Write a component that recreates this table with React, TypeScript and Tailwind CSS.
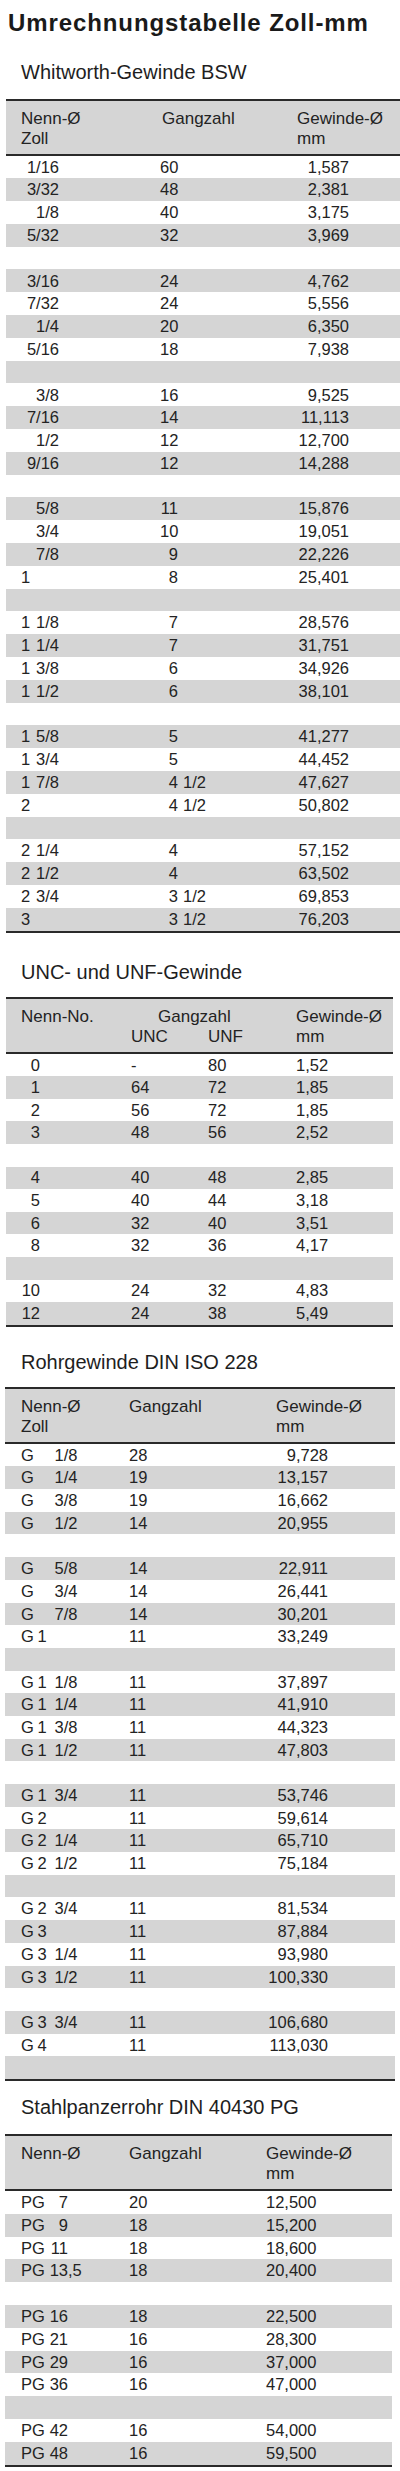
import React from "react";

type BswRow = [string, string, string, string, string] | null;
type UncRow = [string, string, string, string] | null;
type RohrRow = [string, string, string, string] | null;
type PgRow = [string, string, string, string] | null;

const bsw: BswRow[] = [
  ["", "1/16", "60", "", "1,587"],
  ["", "3/32", "48", "", "2,381"],
  ["", "1/8", "40", "", "3,175"],
  ["", "5/32", "32", "", "3,969"],
  null,
  ["", "3/16", "24", "", "4,762"],
  ["", "7/32", "24", "", "5,556"],
  ["", "1/4", "20", "", "6,350"],
  ["", "5/16", "18", "", "7,938"],
  null,
  ["", "3/8", "16", "", "9,525"],
  ["", "7/16", "14", "", "11,113"],
  ["", "1/2", "12", "", "12,700"],
  ["", "9/16", "12", "", "14,288"],
  null,
  ["", "5/8", "11", "", "15,876"],
  ["", "3/4", "10", "", "19,051"],
  ["", "7/8", "9", "", "22,226"],
  ["1", "", "8", "", "25,401"],
  null,
  ["1", "1/8", "7", "", "28,576"],
  ["1", "1/4", "7", "", "31,751"],
  ["1", "3/8", "6", "", "34,926"],
  ["1", "1/2", "6", "", "38,101"],
  null,
  ["1", "5/8", "5", "", "41,277"],
  ["1", "3/4", "5", "", "44,452"],
  ["1", "7/8", "4", "1/2", "47,627"],
  ["2", "", "4", "1/2", "50,802"],
  null,
  ["2", "1/4", "4", "", "57,152"],
  ["2", "1/2", "4", "", "63,502"],
  ["2", "3/4", "3", "1/2", "69,853"],
  ["3", "", "3", "1/2", "76,203"],
];

const unc: UncRow[] = [
  ["0", "-", "80", "1,52"],
  ["1", "64", "72", "1,85"],
  ["2", "56", "72", "1,85"],
  ["3", "48", "56", "2,52"],
  null,
  ["4", "40", "48", "2,85"],
  ["5", "40", "44", "3,18"],
  ["6", "32", "40", "3,51"],
  ["8", "32", "36", "4,17"],
  null,
  ["10", "24", "32", "4,83"],
  ["12", "24", "38", "5,49"],
];

const rohr: RohrRow[] = [
  ["", "1/8", "28", "9,728"],
  ["", "1/4", "19", "13,157"],
  ["", "3/8", "19", "16,662"],
  ["", "1/2", "14", "20,955"],
  null,
  ["", "5/8", "14", "22,911"],
  ["", "3/4", "14", "26,441"],
  ["", "7/8", "14", "30,201"],
  ["1", "", "11", "33,249"],
  null,
  ["1", "1/8", "11", "37,897"],
  ["1", "1/4", "11", "41,910"],
  ["1", "3/8", "11", "44,323"],
  ["1", "1/2", "11", "47,803"],
  null,
  ["1", "3/4", "11", "53,746"],
  ["2", "", "11", "59,614"],
  ["2", "1/4", "11", "65,710"],
  ["2", "1/2", "11", "75,184"],
  null,
  ["2", "3/4", "11", "81,534"],
  ["3", "", "11", "87,884"],
  ["3", "1/4", "11", "93,980"],
  ["3", "1/2", "11", "100,330"],
  null,
  ["3", "3/4", "11", "106,680"],
  ["4", "", "11", "113,030"],
  null,
];

const pg: PgRow[] = [
  ["7", "", "20", "12,500"],
  ["9", "", "18", "15,200"],
  ["11", "", "18", "18,600"],
  ["13", ",5", "18", "20,400"],
  null,
  ["16", "", "18", "22,500"],
  ["21", "", "16", "28,300"],
  ["29", "", "16", "37,000"],
  ["36", "", "16", "47,000"],
  null,
  ["42", "", "16", "54,000"],
  ["48", "", "16", "59,500"],
];

const stripe = (i: number) => (i % 2 === 1 ? "bg-[#d5d5d5]" : "bg-white");

function Heading({ children, className }: { children: React.ReactNode; className: string }) {
  return <h2 className={`pl-[21px] text-[20px] leading-[24px] font-normal text-[#1e1e1e] ${className}`}>{children}</h2>;
}

export default function App() {
  return (
    <div className="w-[400px] bg-white font-['Liberation_Sans',Arial,sans-serif] text-[#232323]">
      <h1 className="pl-[8px] pt-[9px] text-[24px] leading-[28px] font-bold tracking-[0.9px] text-[#1a1a1a]">
        Umrechnungstabelle Zoll-mm
      </h1>

      {/* Whitworth */}
      <Heading className="mt-[23px]">Whitworth-Gewinde BSW</Heading>
      <div className="ml-[6px] mt-[14.5px] w-[394px] border-b-2 border-[#2a2a2a]">
        <div className="flex border-y-2 border-[#2a2a2a] bg-[#d5d5d5] pl-[15px] pt-[8px] pb-[5px] text-[17px] leading-[20px]">
          <div className="w-[141px]">
            <div>Nenn-Ø</div>
            <div>Zoll</div>
          </div>
          <div className="w-[135px]">Gangzahl</div>
          <div>
            <div>Gewinde-Ø</div>
            <div>mm</div>
          </div>
        </div>
        {bsw.map((r, i) => (
          <div key={i} className={`flex h-[22.8px] items-center pl-[15px] text-[16.5px] ${stripe(i)}`}>
            {r && (
              <>
                <div className="w-[139px]">
                  <div className="flex w-[38px]">
                    <span>{r[0]}</span>
                    <span className="ml-auto">{r[1]}</span>
                  </div>
                </div>
                <div className="flex w-[130px]">
                  <span className="w-[18px] text-right">{r[2]}</span>
                  {r[3] && <span className="ml-[5px]">{r[3]}</span>}
                </div>
                <div className="w-[59px] text-right">{r[4]}</div>
              </>
            )}
          </div>
        ))}
      </div>

      {/* UNC / UNF */}
      <Heading className="mt-[27px]">UNC- und UNF-Gewinde</Heading>
      <div className="ml-[6px] mt-[13px] w-[387px] border-b-2 border-[#2a2a2a]">
        <div className="border-y-2 border-[#2a2a2a] bg-[#d5d5d5] pl-[15px] pt-[8px] pb-[5px] text-[17px] leading-[20px]">
          <div className="flex">
            <div className="w-[137px]">Nenn-No.</div>
            <div className="w-[138px]">Gangzahl</div>
            <div>Gewinde-Ø</div>
          </div>
          <div className="flex">
            <div className="w-[110px]" />
            <div className="w-[77px]">UNC</div>
            <div className="w-[88px]">UNF</div>
            <div>mm</div>
          </div>
        </div>
        {unc.map((r, i) => (
          <div key={i} className={`flex h-[22.6px] items-center pl-[15px] text-[16.5px] ${stripe(i)}`}>
            {r && (
              <>
                <div className="w-[19px] text-right">{r[0]}</div>
                <div className="w-[91px]" />
                <div className="w-[77px]">{r[1]}</div>
                <div className="w-[88px]">{r[2]}</div>
                <div>{r[3]}</div>
              </>
            )}
          </div>
        ))}
      </div>

      {/* Rohrgewinde */}
      <Heading className="mt-[23px]">Rohrgewinde DIN ISO 228</Heading>
      <div className="ml-[5px] mt-[13px] w-[390px] border-b-2 border-[#2a2a2a]">
        <div className="flex border-y-2 border-[#2a2a2a] bg-[#d5d5d5] pl-[16px] pt-[8px] pb-[5px] text-[17px] leading-[20px]">
          <div className="w-[108px]">
            <div>Nenn-Ø</div>
            <div>Zoll</div>
          </div>
          <div className="w-[147px]">Gangzahl</div>
          <div>
            <div>Gewinde-Ø</div>
            <div>mm</div>
          </div>
        </div>
        {rohr.map((r, i) => (
          <div key={i} className={`flex h-[22.7px] items-center pl-[16px] text-[16.5px] ${stripe(i)}`}>
            {r && (
              <>
                <span className="w-[16.5px]">G</span>
                <div className="w-[91.5px]">
                  <div className="flex w-[40px]">
                    <span>{r[0]}</span>
                    <span className="ml-auto">{r[1]}</span>
                  </div>
                </div>
                <div className="w-[139px]">{r[2]}</div>
                <div className="w-[60px] text-right">{r[3]}</div>
              </>
            )}
          </div>
        ))}
      </div>

      {/* Stahlpanzerrohr */}
      <Heading className="mt-[14px]">Stahlpanzerrohr DIN 40430 PG</Heading>
      <div className="ml-[5px] mt-[15px] w-[387px] border-b-2 border-[#2a2a2a]">
        <div className="flex border-y-2 border-[#2a2a2a] bg-[#d5d5d5] pl-[16px] pt-[8px] pb-[5px] text-[17px] leading-[20px]">
          <div className="w-[108px]">Nenn-Ø</div>
          <div className="w-[137px]">Gangzahl</div>
          <div>
            <div>Gewinde-Ø</div>
            <div>mm</div>
          </div>
        </div>
        {pg.map((r, i) => (
          <div key={i} className={`flex h-[22.8px] items-center pl-[16px] text-[16.5px] ${stripe(i)}`}>
            {r && (
              <>
                <span className="w-[26px]">PG</span>
                <div className="flex w-[82px]">
                  <span className="w-[21px] text-right">{r[0]}</span>
                  <span>{r[1]}</span>
                </div>
                <div className="w-[137px]">{r[2]}</div>
                <div>{r[3]}</div>
              </>
            )}
          </div>
        ))}
      </div>
    </div>
  );
}
